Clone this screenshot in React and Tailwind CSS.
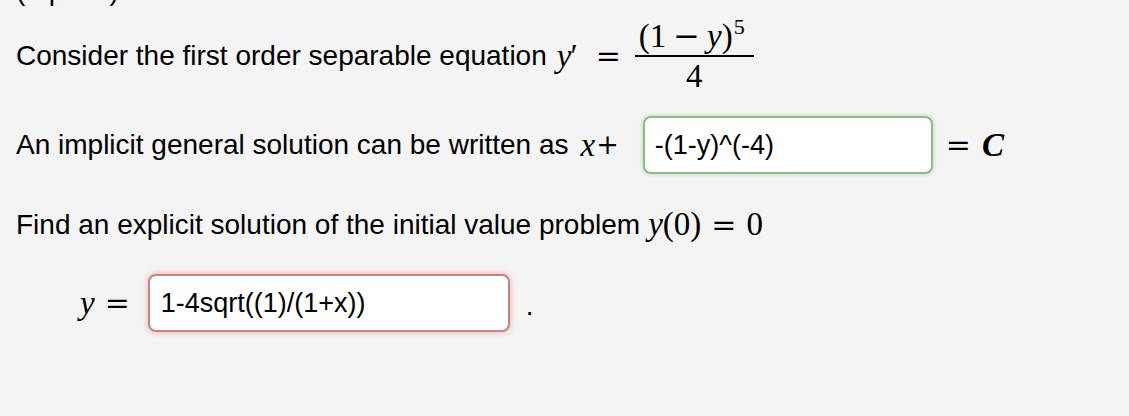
import React from "react";

const sans = "font-['Liberation_Sans',Arial,sans-serif]";
const serif = "font-['Liberation_Serif','Times_New_Roman',serif]";
const dserif = "font-['DejaVu_Serif',serif]";

export default function App() {
  return (
    <div className={`w-[1129px] h-[416px] overflow-hidden bg-[#f4f4f4] text-black ${sans} flex flex-col`}>
      <div className="-mt-[25px] h-[32px] leading-[32px] text-[28px] pl-[16px]">(1 point)</div>

      {/* Row 1 */}
      <div className="mt-[13px] flex items-center pl-[16px]">
        <span className="text-[28px] leading-[32px]">Consider the first order separable equation</span>
        <span className={`${serif} italic text-[33px] leading-[32px] ml-[10px]`}>y</span>
        <span className={`${serif} text-[33px] leading-[32px] -ml-[1px]`}>′</span>
        <span className={`${dserif} text-[30px] leading-[32px] ml-[18px]`}>=</span>
        <span className="inline-flex flex-col items-stretch ml-[14px]">
          <span className={`${serif} text-[33px] leading-[32px] mb-[3px] pl-[4px] pr-[9px] flex items-baseline whitespace-nowrap`}>
            <span>(1</span>
            <span className={`${dserif} text-[32px] mx-[7px]`}>−</span>
            <span className="italic">y</span>
            <span>)</span>
            <sup className="text-[22px] ml-[1px] -top-[13px]">5</sup>
          </span>
          <span className="h-[2px] bg-black" />
          <span className={`${serif} text-[33px] leading-[32px] mt-[3px] text-center`}>4</span>
        </span>
      </div>

      {/* Row 2 */}
      <div className="mt-[24px] flex items-center pl-[16px]">
        <span className="text-[28px] leading-[32px]">An implicit general solution can be written as</span>
        <span className={`${serif} italic text-[33px] leading-[32px] ml-[12px]`}>x</span>
        <span className={`${dserif} text-[27px] leading-[32px] ml-[1px]`}>+</span>
        <div className="ml-[24px] w-[290px] h-[58px] bg-white border-2 border-[#8dbd82] rounded-[8px] shadow-[0_0_5px_rgba(100,170,80,0.45)] flex items-center pl-[10px] text-[27px]">
          -(1-y)^(-4)
        </div>
        <span className={`${dserif} text-[30px] leading-[32px] ml-[13px]`}>=</span>
        <span className={`${serif} italic font-semibold text-[33px] leading-[32px] ml-[11px]`}>C</span>
      </div>

      {/* Row 3 */}
      <div className="mt-[34px] flex items-center pl-[16px]">
        <span className="text-[28px] leading-[32px]">Find an explicit solution of the initial value problem</span>
        <span className={`${serif} text-[33px] leading-[32px] ml-[8px] flex items-baseline`}>
          <span className="italic">y</span>
          <span>(0)</span>
          <span className={`${dserif} text-[30px] mx-[10px]`}>=</span>
          <span>0</span>
        </span>
      </div>

      {/* Row 4 */}
      <div className="mt-[33px] flex items-center pl-[80px]">
        <span className={`${serif} italic text-[33px] leading-[32px]`}>y</span>
        <span className={`${dserif} text-[30px] leading-[32px] ml-[10px]`}>=</span>
        <div className="ml-[18px] w-[362px] h-[58px] bg-white border-2 border-[#c98080] rounded-[8px] shadow-[0_0_6px_rgba(210,90,90,0.45)] flex items-center pl-[11px] text-[27px]">
          1-4sqrt((1)/(1+x))
        </div>
        <span className="text-[28px] leading-[32px] ml-[16px] mt-[6px]">.</span>
      </div>
    </div>
  );
}
